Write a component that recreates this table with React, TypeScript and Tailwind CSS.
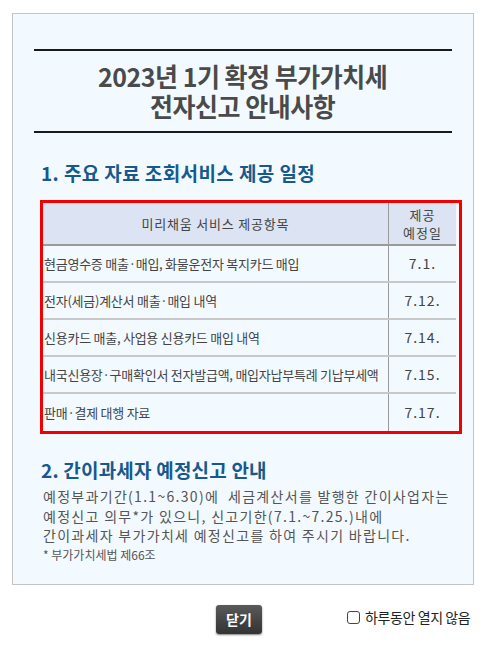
import React from "react";

const rows = [
  ["현금영수증 매출·매입, 화물운전자 복지카드 매입", "7.1."],
  ["전자(세금)계산서 매출·매입 내역", "7.12."],
  ["신용카드 매출, 사업용 신용카드 매입 내역", "7.14."],
  ["내국신용장·구매확인서 전자발급액, 매입자납부특례 기납부세액", "7.15."],
  ["판매·결제 대행 자료", "7.17."],
];

export default function App() {
  return (
    <div
      className="w-[486px] h-[645px] bg-white relative"
      style={{ fontFamily: '"Noto Sans CJK KR", "Noto Sans", sans-serif' }}
    >
      <div className="pt-[13px] px-[12px]">
        <div className="w-[462px] h-[572px] border border-[#c4c4c4] bg-[#f3faff] flex flex-col">
          {/* title */}
          <div className="mt-[35px] mx-[21px] border-t-2 border-b-2 border-[#1a1a1a] h-[84px] flex flex-col items-center justify-center">
            <h1 className="scale-x-[0.96] text-[26px] leading-[30px] font-bold text-[#4a4a4a] text-center whitespace-nowrap tracking-[-0.5px]">
              2023년 1기 확정 부가가치세
              <br />
              전자신고 안내사항
            </h1>
          </div>

          {/* section 1 */}
          <div className="mt-[28px] ml-[28px] text-[19px] leading-[24px] font-bold text-[#17598c] tracking-[0.4px]">
            1. 주요 자료 조회서비스 제공 일정
          </div>
          <div className="mt-[15px] ml-[27px] w-[422px] h-[234px] border-[3px] border-[#f00000]">
            <div className="w-[413px] text-[13px] text-[#444]">
              <div className="flex h-[43px] bg-[#dce3f2] border-b-2 border-[#9a9a9a]">
                <div className="flex-1 flex items-center justify-center tracking-[0.8px]">
                  미리채움 서비스 제공항목
                </div>
                <div className="w-[68px] border-l border-[#9a9a9a] flex items-center justify-center text-center leading-[18px] tracking-[1px]">
                  제공
                  <br />
                  예정일
                </div>
              </div>
              {rows.map((r, i) => (
                <div
                  key={i}
                  className={`flex h-[37px] ${i < rows.length - 1 ? "border-b-2 border-[#c8c8c8]" : ""}`}
                >
                  <div className="flex-1 flex items-center pl-[1px] tracking-[-0.25px] whitespace-nowrap">
                    {r[0]}
                  </div>
                  <div className="w-[68px] border-l border-[#9a9a9a] flex items-center justify-center text-[14px] tracking-[1px]">
                    {r[1]}
                  </div>
                </div>
              ))}
            </div>
          </div>

          {/* section 2 */}
          <div className="mt-[24px] ml-[28px] text-[19px] leading-[24px] font-bold text-[#17598c] tracking-[0.2px]">
            2. 간이과세자 예정신고 안내
          </div>
          <div className="mt-[5px] ml-[30px] text-[14px] leading-[19.5px] text-[#555] tracking-[1.3px] whitespace-nowrap">
            <div>예정부과기간(1.1~6.30)에&nbsp; 세금계산서를 발행한 간이사업자는</div>
            <div>예정신고 의무*가 있으니, 신고기한(7.1.~7.25.)내에</div>
            <div>간이과세자 부가가치세 예정신고를 하여 주시기 바랍니다.</div>
            <div className="text-[12px] leading-[18px] tracking-[0px]">* 부가가치세법 제66조</div>
          </div>
        </div>
      </div>

      {/* footer */}
      <div className="absolute left-[216px] top-[605px] w-[46px] h-[29px] rounded-[3px] bg-gradient-to-b from-[#5a5a5a] to-[#333] shadow-[0_1px_2px_rgba(0,0,0,0.5)] flex items-center justify-center text-white text-[14px] font-bold">
        닫기
      </div>
      <label className="absolute left-[347px] top-[607px] flex items-center gap-[5px] text-[14px] text-[#222] tracking-[-0.4px]">
        <span className="w-[13px] h-[13px] border border-[#444] rounded-[3px] bg-white" />
        하루동안 열지 않음
      </label>
    </div>
  );
}
